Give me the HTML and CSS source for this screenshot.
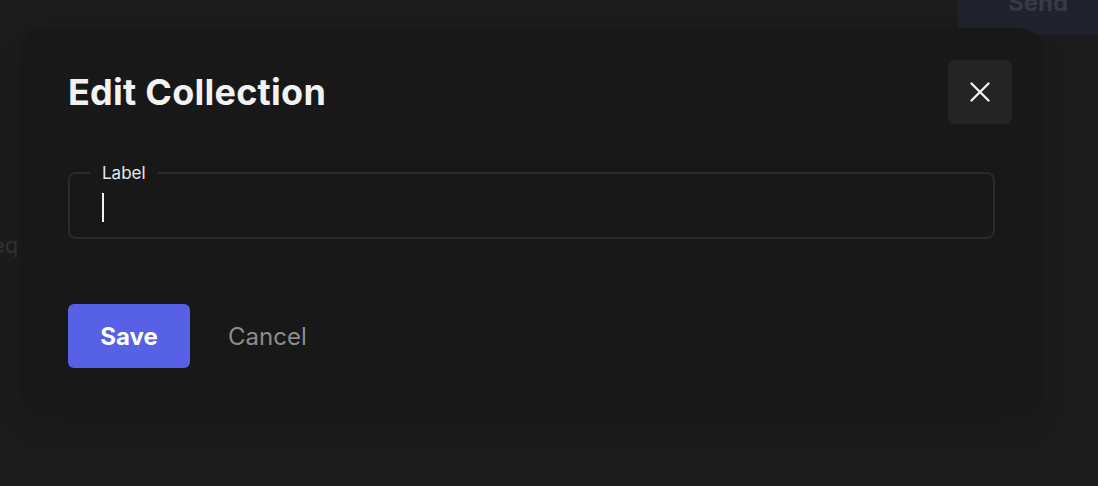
FILE: index.html
```html
<!DOCTYPE html>
<html lang="en">
<head>
<meta charset="utf-8">
<title>Edit Collection</title>
<link rel="stylesheet" href="styles.css">
</head>
<body>
<div class="app">
  <div class="bg-send">Send</div>
  <div class="bg-text">Req</div>
</div>
<div class="overlay">
  <div class="modal" role="dialog" aria-label="Edit Collection">
    <div class="modal-header">
      <h2 class="modal-title">Edit Collection</h2>
      <button class="close-btn" aria-label="Close">
        <svg width="20" height="20" viewBox="0 0 20 20" fill="none" stroke="#f2f2f2" stroke-width="2.3" stroke-linecap="round"><path d="M1.5 1.5L18.5 18.5M18.5 1.5L1.5 18.5"/></svg>
      </button>
    </div>
    <fieldset class="field">
      <legend class="field-label">Label</legend>
      <span class="caret"></span>
    </fieldset>
    <div class="actions">
      <button class="btn-primary">Save</button>
      <button class="btn-ghost">Cancel</button>
    </div>
  </div>
</div>
</body>
</html>
```

FILE: styles.css
```css
* { box-sizing: border-box; }
html, body { margin: 0; padding: 0; }
body {
  width: 1098px;
  height: 486px;
  overflow: hidden;
  background: #1c1c1c;
  font-family: Inter, "Noto Sans", sans-serif;
  position: relative;
}
.app { position: absolute; inset: 0; }
.bg-send {
  position: absolute;
  left: 958px;
  top: -24px;
  width: 150px;
  height: 59px;
  background: #20222e;
  color: #393a44;
  font-weight: 700;
  font-size: 24px;
  padding: 12px 0 0 50px;
}
.bg-text {
  position: absolute;
  left: -22px;
  top: 232px;
  font-size: 22px;
  color: #333333;
}
.overlay {
  position: absolute;
  inset: 0;
  padding: 28px 0 0 20px;
}
.modal {
  width: 1023px;
  height: 386px;
  background: #181818;
  border-radius: 24px;
  padding: 32px 48px 0 48px;
  box-shadow: 0 14px 30px rgba(0,0,0,0.12);
}
.modal-header {
  display: flex;
  align-items: center;
  justify-content: space-between;
  height: 64px;
  margin-right: -17px;
}
.modal-title {
  margin: 0;
  font-size: 36px;
  font-weight: 700;
  color: #f2f2f2;
  letter-spacing: 0.25px;
}
.close-btn {
  width: 64px;
  height: 64px;
  border: 0;
  border-radius: 6px;
  background: #242424;
  display: flex;
  align-items: center;
  justify-content: center;
  padding: 0;
}
.field {
  margin: 40px 0 0 0;
  height: 75px;
  border: 2px solid #2b2b2b;
  border-radius: 8px;
  padding: 0 0 0 20px;
  min-width: 0;
}
.field-label {
  padding: 0 12px;
  font-size: 17px;
  color: #e8e8e8;
  line-height: 18px;
}
.caret {
  display: block;
  width: 2px;
  height: 29px;
  background: #f2f2f2;
  margin: 11px 0 0 12px;
}
.actions {
  display: flex;
  align-items: center;
  gap: 38px;
  margin-top: 65px;
}
.btn-primary {
  width: 122px;
  height: 64px;
  border: 0;
  border-radius: 6px;
  background: #5661e6;
  color: #ffffff;
  font-family: Inter, sans-serif;
  font-weight: 700;
  font-size: 24px;
}
.btn-ghost {
  border: 0;
  background: none;
  padding: 0;
  color: #8c8c8c;
  font-family: Inter, sans-serif;
  font-size: 24px;
}
```
